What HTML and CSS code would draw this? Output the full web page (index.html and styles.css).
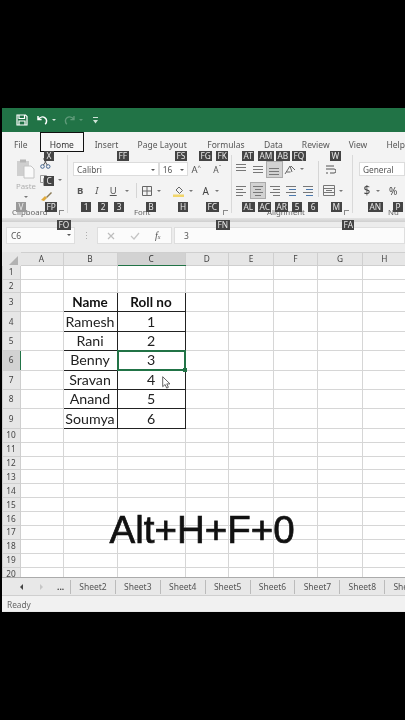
FILE: index.html
```html
<!DOCTYPE html>
<html lang="en">
<head>
<meta charset="utf-8">
<title>Excel</title>
<link rel="stylesheet" href="styles.css">
</head>
<body>
<div class="app">
  <header class="titlebar">
    <svg class="qa" width="12" height="12" viewBox="0 0 12 12" fill="none" stroke="#fff" stroke-width="1.2"><path d="M1 1h8.500L11 2.500V11H1z"/><path d="M3 1v3.500h5.500V1M3 11V7h6v4"/></svg>
    <svg class="qa2" width="11" height="10" viewBox="0 0 11 10" fill="none" stroke="#fff" stroke-width="1.500"><path d="M1 1v3.600h3.600M1.200 4.400C3 2 6 1.400 8 2.800s2.200 4.400.2 6.400"/></svg>
    <span class="caret"></span>
    <svg class="qa3" width="11" height="10" viewBox="0 0 11 10" fill="none" stroke="#5f9a79" stroke-width="1.400"><path d="M10 1v3.600H6.400M9.800 4.400C8 2 5 1.400 3 2.800s-2.200 4.400-.2 6.400"/></svg>
    <span class="caret faded"></span>
    <svg class="qa4" width="5" height="7" viewBox="0 0 5 7" fill="#cfe3d8"><rect y="0" width="5" height="1"/><path d="M0 3h5L2.500 6.500z"/></svg>
  </header>

  <nav class="tabs">
    <span class="tab t-file">File</span>
    <span class="tab t-home">Home</span>
    <span class="tab t-ins">Insert</span>
    <span class="tab t-page">Page Layout</span>
    <span class="tab t-form">Formulas</span>
    <span class="tab t-data">Data</span>
    <span class="tab t-rev">Review</span>
    <span class="tab t-view">View</span>
    <span class="tab">Help</span>
  </nav>

  <section class="ribbon">
    <div class="group g-clip">
      <div class="clip-row">
        <div class="paste">
          <svg width="20" height="21" viewBox="0 0 20 21"><path d="M1 3h12v15H1z" fill="#cfcfcf"/><path d="M4 1.500h6v3H4z" fill="#b5b5b5"/><path d="M8 8h7l3 3v9H8z" fill="#fafafa" stroke="#c4c4c4"/></svg>
          <span class="paste-l">Paste</span>
          <span class="caret grey"></span>
        </div>
        <div class="clip-tools">
          <svg width="11" height="11" viewBox="0 0 11 11" fill="none" stroke="#44658f" stroke-width="1"><circle cx="2.500" cy="8.500" r="1.800"/><circle cx="8.200" cy="8.500" r="1.800"/><path d="M3.500 7L7.500.5M7.200 7L3.500.5" stroke="#555"/></svg>
          <span class="copy"><svg width="12" height="11" viewBox="0 0 12 11" fill="#f5f5f5" stroke="#9a9a9a"><path d="M.5.500h6v7h-6zM3.500 3.500h6v7h-6z"/></svg><i class="caret grey"></i></span>
          <svg width="12" height="11" viewBox="0 0 12 11"><path d="M6 6l5-5 1 1-5 5z" fill="#8a7a55"/><path d="M1 9l4-4 2 2-3 3z" fill="#e0a93b"/></svg>
        </div>
      </div>
      <div class="glabel l-clip"><span>Clipboard</span><i class="launch"></i></div>
    </div>

    <div class="group g-font">
      <div class="row r1">
        <span class="box b-font">Calibri<i class="caret dark"></i></span>
        <span class="box b-size">16<i class="caret dark"></i></span>
        <span class="grow-a">A<sup>^</sup></span>
        <span class="grow-a small-a">A<sup>ˇ</sup></span>
      </div>
      <div class="row r2">
        <b class="fmt f-b">B</b>
        <i class="fmt f-i">I</i>
        <u class="fmt f-u">U</u>
        <span class="caret grey"></span>
        <span class="vsep"></span>
        <svg class="f-bord" width="10" height="10" viewBox="0 0 10 10" fill="none" stroke="#666"><path d="M.5.500h9v9h-9zM5 .5v9M.5 5h9"/></svg>
        <span class="caret grey"></span>
        <svg class="f-fill" width="12" height="12" viewBox="0 0 12 12"><path d="M3 5l3-3 3.500 3.500-3 3z" fill="none" stroke="#666"/><rect y="9.500" width="11" height="2.500" fill="#f2d66b"/></svg>
        <span class="caret grey"></span>
        <span class="f-col">A</span>
        <span class="caret grey"></span>
      </div>
      <div class="glabel l-font"><span>Font</span><i class="launch"></i></div>
    </div>

    <div class="group g-align">
      <div class="row r1 ra1">
        <span class="al a-top"><i></i><i></i><i></i></span>
        <span class="al a-mid"><i></i><i></i><i></i></span>
        <span class="al a-bot on"><i></i><i></i><i></i></span>
        <svg class="orient" width="12" height="11" viewBox="0 0 12 11" fill="none" stroke="#666"><path d="M1 10l5-8 2 6M2.500 8h4M7 2l4 4"/></svg>
        <span class="caret grey"></span>
        <span class="vsep tall"></span>
        <svg class="wrap" width="11" height="12" viewBox="0 0 11 12" fill="none" stroke="#555"><path d="M1 2h8M1 5h8a1.500 1.500 0 010 4H5M1 9h2"/></svg>
      </div>
      <div class="row r2 ra2">
        <span class="al h-l"><i></i><i></i><i></i><i></i></span>
        <span class="al h-c on"><i></i><i></i><i></i><i></i></span>
        <span class="al h-r"><i></i><i></i><i></i><i></i></span>
        <span class="al h-r ind"><i></i><i></i><i></i><i></i></span>
        <span class="al h-r ind"><i></i><i></i><i></i><i></i></span>
        <svg class="merge" width="12" height="11" viewBox="0 0 12 11" fill="none" stroke="#777"><path d="M.5.500h11v10H.5zM.5 3.500h11M.5 7.500h11M3 5.500h6" /></svg>
        <span class="caret grey"></span>
      </div>
      <div class="glabel l-align"><span>Alignment</span><i class="launch"></i></div>
    </div>

    <div class="group g-num">
      <div class="row r1"><span class="box b-gen">General</span></div>
      <div class="row r2">
        <span class="n-d">$</span>
        <span class="caret grey"></span>
        <span class="n-p">%</span>
      </div>
      <div class="glabel l-num"><span>Nu</span></div>
    </div>
  </section>
  <div class="band"></div>

  <section class="fbar">
    <span class="namebox">C6<i class="caret dark"></i></span>
    <span class="dots">⋮</span>
    <span class="fx-btns">
      <svg width="8" height="8" viewBox="0 0 8 8" stroke="#bdbdbd" stroke-width="1.200"><path d="M1 1l6 6M7 1L1 7"/></svg>
      <svg width="10" height="8" viewBox="0 0 10 8" fill="none" stroke="#c4c4c4" stroke-width="1.200"><path d="M1 4l3 3 5-6"/></svg>
      <em>f<small>x</small></em>
    </span>
    <span class="fval">3</span>
  </section>

  <div class="sheetwrap">
  <table class="sheet">
    <colgroup><col class="c0"><col class="ca"><col class="cb"><col class="cc"><col class="cd"><col class="ce"><col class="cf"><col class="cg"><col class="ch"></colgroup>
    <thead><tr><th class="corner"><svg width="9" height="9" viewBox="0 0 9 9"><path d="M9 0v9H0z" fill="#b2b2b2"/></svg></th><th>A</th><th>B</th><th class="sel">C</th><th>D</th><th>E</th><th>F</th><th>G</th><th>H</th></tr></thead>
    <tbody>
      <tr class="xs"><th>1</th><td></td><td></td><td></td><td></td><td></td><td></td><td></td><td></td></tr>
      <tr class="xs"><th>2</th><td></td><td></td><td></td><td></td><td></td><td></td><td></td><td></td></tr>
      <tr class="lg"><th>3</th><td></td><td class="d hd">Name</td><td class="d hd">Roll no</td><td></td><td></td><td></td><td></td><td></td></tr>
      <tr class="lg"><th>4</th><td></td><td class="d">Ramesh</td><td class="d">1</td><td></td><td></td><td></td><td></td><td></td></tr>
      <tr class="lg"><th>5</th><td></td><td class="d">Rani</td><td class="d">2</td><td></td><td></td><td></td><td></td><td></td></tr>
      <tr class="lg"><th class="sel-r">6</th><td></td><td class="d">Benny</td><td class="d active">3</td><td></td><td></td><td></td><td></td><td></td></tr>
      <tr class="lg"><th>7</th><td></td><td class="d">Sravan</td><td class="d">4</td><td></td><td></td><td></td><td></td><td></td></tr>
      <tr class="lg"><th>8</th><td></td><td class="d">Anand</td><td class="d">5</td><td></td><td></td><td></td><td></td><td></td></tr>
      <tr class="lg"><th>9</th><td></td><td class="d">Soumya</td><td class="d">6</td><td></td><td></td><td></td><td></td><td></td></tr>
      <tr class="sm"><th>10</th><td></td><td></td><td></td><td></td><td></td><td></td><td></td><td></td></tr>
      <tr class="sm"><th>11</th><td></td><td></td><td></td><td></td><td></td><td></td><td></td><td></td></tr>
      <tr class="sm"><th>12</th><td></td><td></td><td></td><td></td><td></td><td></td><td></td><td></td></tr>
      <tr class="sm"><th>13</th><td></td><td></td><td></td><td></td><td></td><td></td><td></td><td></td></tr>
      <tr class="sm"><th>14</th><td></td><td></td><td></td><td></td><td></td><td></td><td></td><td></td></tr>
      <tr class="sm"><th>15</th><td></td><td></td><td></td><td></td><td></td><td></td><td></td><td></td></tr>
      <tr class="sm"><th>16</th><td></td><td></td><td></td><td></td><td></td><td></td><td></td><td></td></tr>
      <tr class="sm"><th>17</th><td></td><td></td><td></td><td></td><td></td><td></td><td></td><td></td></tr>
      <tr class="sm"><th>18</th><td></td><td></td><td></td><td></td><td></td><td></td><td></td><td></td></tr>
      <tr class="sm"><th>19</th><td></td><td></td><td></td><td></td><td></td><td></td><td></td><td></td></tr>
      <tr class="sm"><th>20</th><td></td><td></td><td></td><td></td><td></td><td></td><td></td><td></td></tr>
    </tbody>
  </table>
  </div>

  <footer class="sheettabs">
    <span class="nav"><i class="tri-l"></i><i class="tri-r"></i><span class="more">...</span></span>
    <span class="st">Sheet2</span><span class="st">Sheet3</span><span class="st">Sheet4</span><span class="st">Sheet5</span><span class="st">Sheet6</span><span class="st">Sheet7</span><span class="st">Sheet8</span><span class="st">Sheet9</span>
  </footer>
  <div class="status">Ready</div>

  <div class="caption">Alt+H+F+0</div>

  <svg class="cursor" width="9" height="13" viewBox="0 0 9 13"><path d="M.7.700v10l2.400-2.200 1.600 3.600 1.700-.8-1.600-3.400h3.200z" fill="#fff" stroke="#555" stroke-width=".9"/></svg>

  <span class="tip k1 kx">X</span><span class="tip k1 kff">FF</span><span class="tip k1 kfs">FS</span><span class="tip k1 kfg">FG</span><span class="tip k1 kfk">FK</span><span class="tip k1 kat">AT</span><span class="tip k1 kam">AM</span><span class="tip k1 kab">AB</span><span class="tip k1 kfq">FQ</span><span class="tip k1 kw">W</span>
  <span class="tip k2 kc">C</span>
  <span class="tip k3 kv">V</span><span class="tip k3 kfp">FP</span><span class="tip k3 n1">1</span><span class="tip k3 n2">2</span><span class="tip k3 n3">3</span><span class="tip k3 kb">B</span><span class="tip k3 kh">H</span><span class="tip k3 kfc">FC</span><span class="tip k3 kal">AL</span><span class="tip k3 kac">AC</span><span class="tip k3 kar">AR</span><span class="tip k3 n5">5</span><span class="tip k3 n6">6</span><span class="tip k3 km">M</span><span class="tip k3 kan">AN</span><span class="tip k3 kp">P</span>
  <span class="tip k4 kfo">FO</span><span class="tip k4 kfn">FN</span><span class="tip k4 kfa">FA</span>
</div>
</body>
</html>
```
FILE: styles.css
```css
* { box-sizing: border-box; }
html, body { margin: 0; height: 720px; background: #000; overflow: hidden; }
body { padding: 108px 0 0 2px; font-family: "Noto Sans", "Open Sans", sans-serif; }

.app { position: relative; width: 403px; height: 504px; background: #f3f3f3; overflow: hidden; color: #444; font-size: 8.5px; border-bottom: 1px solid #e8e8e8; filter: blur(.3px); }

/* title bar */
.titlebar { height: 24px; background: #217346; display: flex; align-items: center; padding-left: 14px; }
.qa3 { margin-left: 8px; }
.qa2 { margin-left: 9px; }
.qa4 { margin-left: 10px; }
.caret { display: inline-block; width: 0; height: 0; border: 2px solid transparent; border-top: 2.500px solid #d8e8df; border-bottom: 0; margin-left: 4px; flex: none; }
.caret.faded { border-top-color: #5f9a79; }
.caret.grey { border-top-color: #777; }
.caret.dark { border-top-color: #555; }

/* tabs */
.tabs { height: 23px; display: flex; align-items: flex-start; font-size: 8.500px; color: #555; background: #f3f3f3; white-space: nowrap; }
.tab { line-height: 19px; padding-top: 3px; }
.t-file { margin-left: 12px; width: 26px; }
.t-home { width: 44px; height: 19.500px; margin-right: 11px; border: 1px solid #111; padding: 0; text-align: center; line-height: 23px; color: #333; background: #f7f7f7; }
.t-ins { width: 43px; }
.t-page { width: 70px; }
.t-form { width: 57px; }
.t-data { width: 38px; }
.t-rev { width: 47px; }
.t-view { width: 38px; }

/* ribbon */
.ribbon { height: 63px; display: flex; background: #f3f3f3; }
.group { position: relative; border-right: 1px solid #d9d9d9; height: 58px; flex: none; }
.g-clip { width: 66px; }
.g-font { width: 164px; padding-left: 5px; }
.g-align { width: 121px; padding-left: 1px; }
.g-num { width: 52px; border-right: 0; padding-left: 6px; }
.clip-row { display: flex; padding: 3px 0 0 11px; }
.paste { width: 26px; display: flex; flex-direction: column; align-items: center; }
.paste-l { font-size: 7.800px; color: #b0b0b0; line-height: 12px; margin-top: 1px; }
.paste .caret { margin: 4px 0 0; }
.clip-tools { display: flex; flex-direction: column; gap: 5.500px; padding: 0 0 0 1px; }
.copy { display: flex; align-items: center; height: 11px; }
.copy .caret { margin-left: 6px; }
.row { display: flex; align-items: center; white-space: nowrap; }
.r1 { height: 16px; margin-top: 6px; }
.r2 { height: 17px; margin-top: 5px; }
.box { display: inline-flex; align-items: center; height: 14.500px; background: #fff; border: 1px solid #dcdcdc; font-size: 8.300px; color: #555; padding-left: 3px; position: relative; }
.box .caret { position: absolute; right: 3px; top: 6px; }
.b-font { width: 87px; }
.b-size { width: 29px; }
.b-gen { width: 60px; }
.grow-a { font-size: 9.500px; margin-left: 4px; width: 18px; color: #555; }
.grow-a sup { font-size: 6px; line-height: 0; }
.small-a { font-size: 8.500px; }
.fmt { font-size: 9.500px; width: 16.500px; text-align: center; color: #555; }
.f-b { margin-left: -1px; }
.vsep { width: 1px; height: 15px; background: #d5d5d5; margin: 0 5px 0 7px; flex: none; }
.f-bord { margin-left: 0; }
.f-fill { margin-left: 12px; }
.f-col { margin-left: 9.500px; font-size: 10px; }
.r2 .caret { margin-left: 5px; }
.r2 .f-u + .caret { margin-left: 3.500px; }
.r2 .f-fill + .caret { margin-left: 4px; }
.r2 .f-col + .caret { margin-left: 6.500px; }

.al { width: 16.500px; height: 17px; display: flex; flex-direction: column; justify-content: center; align-items: center; gap: 2px; flex: none; }
.al i { display: block; width: 10px; height: 1px; background: #777; }
.a-top { justify-content: flex-start; padding-top: 3px; }
.a-bot { justify-content: flex-end; padding-bottom: 2px; }
.al.on { background: #d2d2d2; border: 1px solid #aaa; }
.h-l { align-items: flex-start; padding-left: 3px; }
.h-l i:nth-child(even) { width: 7px; }
.h-c i:nth-child(even) { width: 6px; }
.h-r { align-items: flex-end; padding-right: 3px; }
.h-r i:nth-child(even) { width: 7px; }
.ind i:nth-child(even) { background: #4a78ad; }
.orient { margin-left: 1.500px; }
.ra1 { align-items: flex-start; }
.ra1 svg { margin-top: 3px; }
.ra1 .caret { margin-top: 7px; }
.ra1 .vsep { margin: 0 5.500px 0 14px; height: 36px; }
.merge { margin-left: 7.500px; }
.ra2 .caret { margin-left: 4px; }
.n-d { font-size: 12px; margin-left: 4.500px; }
.n-p { font-size: 10px; margin-left: 9px; }
.g-num .caret { margin-left: 5.500px; }

.glabel { position: absolute; top: 52px; left: 0; right: 0; height: 11px; font-size: 7.800px; line-height: 11px; color: #666; white-space: nowrap; }
.l-clip span { position: absolute; left: 10px; }
.l-font span { position: absolute; left: 66px; }
.l-align span { position: absolute; left: 35px; }
.l-num span { position: absolute; left: 35px; }
.launch { position: absolute; right: 3px; top: 3px; width: 5px; height: 5px; border-left: 1px solid #888; border-top: 1px solid #888; }

.band { height: 4px; background: linear-gradient(#e3e3e3, #cfcfcf); }

/* formula bar */
.fbar { height: 30px; background: #ececec; display: flex; align-items: flex-start; padding: 5px 0 0 4px; }
.namebox, .fx-btns, .fval { height: 17px; background: #fbfbfb; border: 1px solid #dedede; font-size: 8.500px; display: flex; align-items: center; color: #555; }
.namebox { width: 69px; padding-left: 4px; position: relative; }
.namebox .caret { position: absolute; right: 3px; top: 6px; }
.dots { width: 22px; text-align: center; color: #aaa; line-height: 17px; font-size: 9px; }
.fx-btns { width: 75px; gap: 15px; padding-left: 9px; }
.fx-btns em { font-family: "Liberation Serif", serif; color: #555; font-size: 10px; }
.fx-btns small { font-size: 6px; }
.fval { flex: 1; margin-left: 2px; padding-left: 9px; }

/* sheet */
.sheetwrap { height: 325px; overflow: hidden; background: #fff; }
.sheet { border-collapse: collapse; table-layout: fixed; width: 404px; margin-left: -.5px; }
.c0 { width: 18px; } .ca { width: 43px; } .cb { width: 54px; } .cc { width: 68px; } .cd { width: 43.500px; }
.ce { width: 45px; } .cf { width: 44px; } .cg { width: 45px; } .ch { width: 43.500px; }
.sheet th { background: #e6e6e6; font-weight: 400; font-size: 8.300px; color: #444; padding: 0; border: 1px solid #cfcfcf; line-height: 10px; overflow: hidden; }
.sheet thead th { height: 13px; }
.sheet .corner { text-align: right; vertical-align: bottom; padding: 0 2px 0 0; border-color: #e6e6e6; }
.corner svg { display: block; margin-left: auto; }
.sheet th.sel { background: #d2d2d2; border-bottom: 1.500px solid #217346; color: #333; }
.sheet th.sel-r { background: #d2d2d2; border-right: 1.500px solid #217346; }
.sheet td { border: 1px solid #d6d6d6; padding: 0; }
.xs { height: 13.500px; }
.sm { height: 13.900px; }
.lg { height: 19.400px; }
.sheet td.d { border: 1px solid #222; font-family: Lato, "Liberation Sans", sans-serif; font-size: 14.200px; line-height: 18px; text-align: center; color: #222; white-space: nowrap; }
.sheet td.hd { font-size: 13.500px; font-weight: 700; color: #111; }
.sheet td.active { position: relative; }
.active::after { content: ""; position: absolute; inset: -1px; border: 2px solid #217346; z-index: 2; }
.active::before { content: ""; position: absolute; right: -2.500px; bottom: -2.500px; width: 4px; height: 4px; background: #217346; z-index: 3; }

/* sheet tabs */
.sheettabs { height: 19px; background: #e8e8e8; border-top: 1px solid #ababab; border-bottom: 1px solid #cfcfcf; display: flex; align-items: center; overflow: hidden; font-size: 8.500px; color: #555; white-space: nowrap; }
.nav { width: 69px; height: 14px; flex: none; display: flex; align-items: center; padding-left: 18px; border-right: 1px solid #bbb; }
.tri-l { border: 3px solid transparent; border-right: 3px solid #444; border-left: 0; }
.tri-r { border: 3px solid transparent; border-left: 3px solid #c6c6c6; border-right: 0; margin-left: 17px; }
.more { margin-left: 14px; font-weight: 700; color: #444; }
.st { width: 44.900px; flex: none; height: 14px; line-height: 14px; text-align: center; border-right: 1px solid #bbb; }

.status { height: 15px; background: #f1f1f1; font-size: 8.300px; line-height: 15px; padding: 1px 0 0 5px; color: #666; }

/* overlays */
.caption { position: absolute; left: 107.500px; top: 400px; font-family: "Liberation Sans", Arial, sans-serif; font-size: 38.500px; line-height: 44px; color: #111; white-space: nowrap; -webkit-text-stroke: .7px #111; }
.cursor { position: absolute; left: 160px; top: 268px; z-index: 4; }

.tip { position: absolute; height: 10px; min-width: 10px; padding: 0 1.500px; background: #444; color: #e8e8e8; font-size: 8.300px; line-height: 10px; text-align: center; }
.k1 { top: 43px; } .k2 { top: 68px; } .k3 { top: 94px; } .k4 { top: 112px; }
.kx { left: 42px; } .kff { left: 115px; } .kfs { left: 173px; } .kfg { left: 197px; } .kfk { left: 214px; } .kat { left: 240px; } .kam { left: 256px; } .kab { left: 274px; } .kfq { left: 290px; } .kw { left: 328px; }
.kc { left: 42px; }
.kv { left: 14px; background: #999; } .kfp { left: 43px; } .n1 { left: 79px; } .n2 { left: 96px; } .n3 { left: 112px; } .kb { left: 144px; } .kh { left: 176px; } .kfc { left: 204px; } .kal { left: 240px; } .kac { left: 256px; } .kar { left: 273px; } .n5 { left: 290px; } .n6 { left: 306px; } .km { left: 329px; } .kan { left: 366px; } .kp { left: 391px; }
.kfo { left: 55px; } .kfn { left: 214px; } .kfa { left: 340px; }
```
